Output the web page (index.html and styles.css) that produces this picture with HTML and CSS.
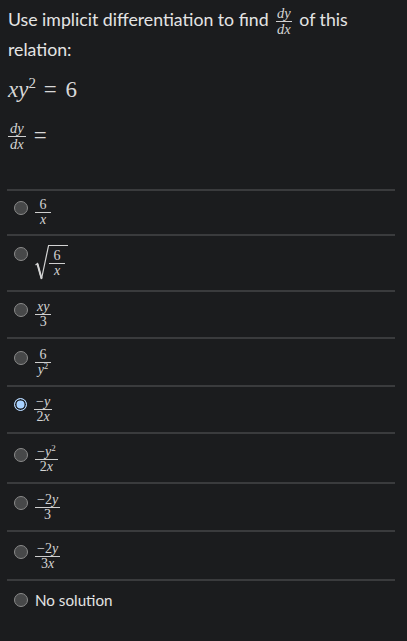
FILE: index.html
```html
<!DOCTYPE html>
<html>
<head>
<meta charset="utf-8">
<link rel="stylesheet" href="styles.css">
</head>
<body>
<div class="page">
  <p class="question">Use implicit differentiation to find <span class="frac tfrac"><span class="num"><i>dy</i></span><span class="den"><i>dx</i></span></span> of this relation:</p>
  <p class="eq"><i>xy</i><sup>2</sup> <span class="op">=</span> 6</p>
  <p class="eq2"><span class="frac dfrac"><span class="num"><i>dy</i></span><span class="den"><i>dx</i></span></span> <span class="op">=</span></p>

  <ul class="options">
    <li class="row r1"><span class="radio"></span><span class="frac"><span class="num">6</span><span class="den"><i>x</i></span></span></li>
    <li class="row r2"><span class="radio"></span><span class="sqrt"><svg class="rad" width="14" height="36" viewBox="0 0 14 36"><path d="M0.5 20 L2.5 18.5 L6.5 34 L13.5 0.8" fill="none" stroke="#d4d4d4" stroke-width="1.2"/><path d="M2.4 18.8 L6.6 33.5" stroke="#d4d4d4" stroke-width="2" fill="none"/></svg><span class="rad-body"><span class="frac"><span class="num">6</span><span class="den"><i>x</i></span></span></span></span></li>
    <li class="row r3"><span class="radio"></span><span class="frac"><span class="num"><i>xy</i></span><span class="den">3</span></span></li>
    <li class="row r4"><span class="radio"></span><span class="frac"><span class="num">6</span><span class="den"><i>y</i><sup>2</sup></span></span></li>
    <li class="row r5"><span class="radio checked"></span><span class="frac"><span class="num">&minus;<i>y</i></span><span class="den">2<i>x</i></span></span></li>
    <li class="row r6"><span class="radio"></span><span class="frac"><span class="num">&minus;<i>y</i><sup>2</sup></span><span class="den">2<i>x</i></span></span></li>
    <li class="row r7"><span class="radio"></span><span class="frac"><span class="num">&minus;2<i>y</i></span><span class="den">3</span></span></li>
    <li class="row r8"><span class="radio"></span><span class="frac"><span class="num">&minus;2<i>y</i></span><span class="den">3<i>x</i></span></span></li>
    <li class="row text-row"><span class="radio"></span><span class="label">No solution</span></li>
  </ul>
</div>
</body>
</html>
```

FILE: styles.css
```css
html, body {
  margin: 0;
  padding: 0;
  background: #1b1c1e;
}
body {
  color: #e4e4e4;
  font-family: Lato, "Liberation Sans", sans-serif;
  font-size: 17.7px;
}
.page {
  padding: 6px 12px 0 8px;
}
.question {
  margin: 0;
  line-height: 28px;
}
.frac, .eq, .eq2 {
  font-family: "Liberation Serif", "Times New Roman", "DejaVu Serif", serif;
}
.frac i, .eq i {
  font-family: "Liberation Serif", "Times New Roman", "DejaVu Serif", serif;
  font-style: italic;
}
.frac {
  display: inline-flex;
  flex-direction: column;
  align-items: center;
  vertical-align: middle;
  font-size: 14px;
  line-height: 12px;
  color: #d4d4d4;
}
.frac .num {
  padding: 0 2px 1px;
  border-bottom: 1px solid #cfcfcf;
  min-width: 12px;
  text-align: center;
}
.frac .den {
  padding: 1px 2px 0;
  text-align: center;
}
.frac sup {
  font-size: 9px;
  line-height: 0;
  vertical-align: 5px;
}
.tfrac {
  margin: 0 2px;
  font-size: 14.5px;
  line-height: 13px;
}
.tfrac .num {
  padding: 0 1px 1px;
}
.eq {
  margin: 12px 0 0;
  font-size: 23px;
  line-height: 28px;
  color: #d8d8d8;
}
.eq sup {
  font-size: 15px;
  line-height: 0;
  vertical-align: 9px;
}
.eq .op {
  margin: 0 3px 0 2px;
}
.eq2 {
  margin: 17px 0 0;
  font-size: 23px;
  line-height: 30px;
  color: #d8d8d8;
  display: flex;
  align-items: center;
  gap: 8px;
}
.dfrac {
  font-size: 14.5px;
  line-height: 13px;
}
.options {
  list-style: none;
  margin: 38px 0 0 -1px;
  padding: 0;
}
.row {
  display: flex;
  align-items: flex-start;
  gap: 7px;
  border-top: 2px solid #3a3b3d;
  padding: 9px 0 9px 7px;
}
.r1 { padding-top: 8px; padding-bottom: 8px; }
.r4 { padding-top: 10px; }
.r6 { padding-top: 12px; padding-bottom: 9px; }
.r7 { padding-top: 10px; }
.r8 { padding-top: 11px; padding-bottom: 9px; }
.radio {
  flex: none;
  width: 12px;
  height: 12px;
  margin-top: 2px;
  border-radius: 50%;
  background: #474849;
  border: 1px solid #8a8a8a;
}
.radio.checked {
  background: #a9d2ff;
  border: 1.5px solid #b8d9ff;
  box-shadow: inset 0 0 0 1.5px #1b1c1e;
  width: 11px;
  height: 11px;
}
.sqrt {
  display: inline-flex;
  align-items: flex-start;
}
.rad {
  display: block;
}
.rad-body {
  border-top: 1.2px solid #d4d4d4;
  padding: 4px 3px 0 1px;
  margin-left: -1px;
}
.text-row {
  padding-top: 10px;
  align-items: center;
}
.text-row .radio {
  margin-top: 0;
}
.label {
  font-size: 15.2px;
  color: #e4e4e4;
  line-height: 18px;
}
```
